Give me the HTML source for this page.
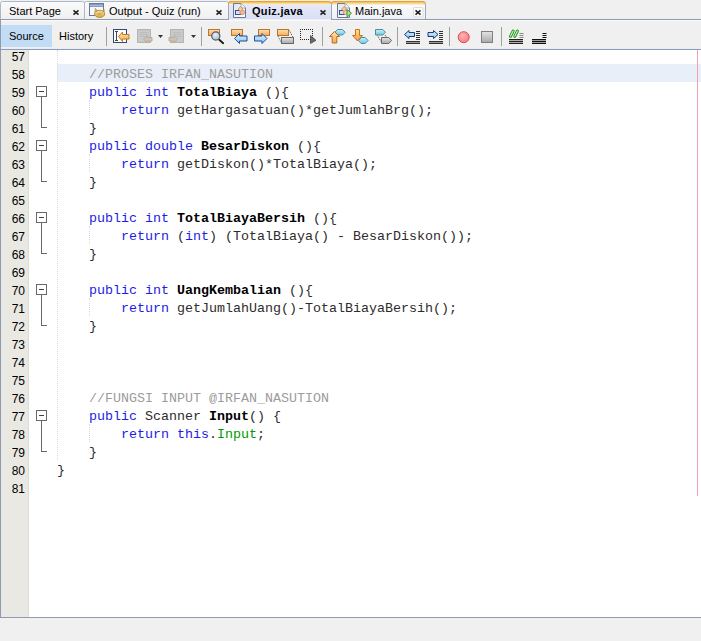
<!DOCTYPE html>
<html><head><meta charset="utf-8">
<style>
html,body{margin:0;padding:0;}
body{width:701px;height:641px;background:#f0f0f0;position:relative;overflow:hidden;font-family:"Liberation Sans",sans-serif;font-size:11px;color:#000;}
.abs{position:absolute;}
#tabs{left:0;top:0;width:701px;height:20px;}
.tab{position:absolute;top:1px;height:18px;box-sizing:border-box;border:1px solid #a9b5c7;border-bottom:none;border-radius:4px 4px 0 0;background:#f4f4f4;}
.tab span.l{position:absolute;top:3px;white-space:nowrap;font-size:11px;line-height:13px;}
.tab .x{position:absolute;top:3px;font-size:10px;font-weight:bold;line-height:13px;}
#tabline{left:0;top:19px;width:701px;height:1px;background:#98a5ba;}
#toolbar{left:0;top:20px;width:701px;height:29px;background:#f0f0f0;border-top:1px solid #fafafa;box-sizing:border-box;border-bottom:1px solid #e6edfb;}
#tbline{left:0;top:49px;width:701px;height:1px;background:#8e9bb0;}
#srcbtn{left:1px;top:25px;width:51px;height:22px;background:#c1dcf4;}
.tl{position:absolute;top:30px;font-size:11px;line-height:13px;white-space:nowrap;}
.tt{position:absolute;top:5px;font-size:11px;line-height:13px;white-space:nowrap;}
.sep{position:absolute;top:27px;width:1px;height:19px;background:#9a9a9a;}
#editor{left:0;top:50px;width:701px;height:567px;background:#fff;overflow:hidden;}
#leftb{left:0;top:20px;width:1px;height:598px;background:#8e9bb0;}
#gutter{left:1px;top:0;width:28px;height:567px;background:#e9e8e2;box-sizing:border-box;border-right:1px solid #dcdcd6;}
#edbot{left:0;top:617px;width:701px;height:1px;background:#8e9bb0;}
.ln{position:absolute;left:0;width:25px;margin-top:1px;text-align:right;font-family:"Liberation Sans",sans-serif;font-size:12px;line-height:18px;height:18px;color:#000;}
.cl{position:absolute;left:57px;white-space:pre;font-family:"Liberation Mono",monospace;font-size:13.333px;line-height:18px;height:18px;color:#2c2c2c;}
.k{color:#1c1ce6;}
.c{color:#9c9c9c;}
.f{color:#009900;}
.cl b{font-weight:bold;color:#000;}
#hl{left:57px;top:14px;width:644px;height:18px;background:#e9eff8;}
#dot{left:57px;top:0;width:0;height:410px;border-left:1px dotted #dadada;}
#margin{left:697px;top:0;width:1px;height:446px;background:#f0a0b0;}
.fb{position:absolute;left:36px;width:9px;height:9px;border:1px solid #686868;background:#fff;}
.fb i{position:absolute;left:2px;top:4px;width:5px;height:1px;background:#404040;}
.fv{position:absolute;left:41px;width:1px;background:#686868;}
.fh{position:absolute;left:41px;width:6px;height:1px;background:#686868;}
.ig{position:absolute;width:0;border-left:1px dotted #d8d8d8;height:18px;}
</style></head><body>
<svg class="abs" style="left:0;top:0" width="701" height="20" viewBox="0 0 701 20">
<defs>
<linearGradient id="tN" x1="0" y1="0" x2="0" y2="1"><stop offset="0" stop-color="#fbfbfb"/><stop offset="1" stop-color="#efefef"/></linearGradient>
<linearGradient id="tS" x1="0" y1="0" x2="0" y2="1"><stop offset="0" stop-color="#e8ebfa"/><stop offset="1" stop-color="#d9dff4"/></linearGradient>
<linearGradient id="tM" x1="0" y1="0" x2="0" y2="1"><stop offset="0" stop-color="#fdfdfd"/><stop offset="1" stop-color="#eef0f4"/></linearGradient>
<linearGradient id="oT" gradientUnits="userSpaceOnUse" x1="0" y1="1.500" x2="0" y2="4.500"><stop offset="0" stop-color="#f4ac30"/><stop offset="0.500" stop-color="#fad078"/><stop offset="1" stop-color="#f4ecd8"/></linearGradient>
<linearGradient id="cat" x1="0" y1="0" x2="0" y2="1"><stop offset="0" stop-color="#f6dca0"/><stop offset="1" stop-color="#dcaa40"/></linearGradient>
<linearGradient id="pg" x1="0" y1="0" x2="1" y2="1"><stop offset="0" stop-color="#dfe4f6"/><stop offset="1" stop-color="#ffffff"/></linearGradient>
</defs>
<!-- tab 1 -->
<path d="M0.500 19.500V3.500a2 2 0 0 1 2-2H82.500a2 2 0 0 1 2 2V19.500z" fill="url(#tN)" stroke="#acb7ca"/>
<!-- tab 2 -->
<path d="M84.500 19.500V3.500a2 2 0 0 1 2-2H226.500a2 2 0 0 1 2 2V19.500z" fill="url(#tN)" stroke="#acb7ca"/>
<!-- tab 3 selected -->
<path d="M228.500 19.500V4a2.500 2.500 0 0 1 2.500-2.500H328.500a3 3 0 0 1 3 3V19.500z" fill="url(#tS)" stroke="#9aa8c0"/>
<path d="M229 5V4a2.500 2.500 0 0 1 2.500-2.500H328.500a3 3 0 0 1 2.500 2.500V5z" fill="url(#oT)"/><path d="M228.500 4.500V4a2.500 2.500 0 0 1 2.500-2.500H328.500a3 3 0 0 1 3 3" fill="none" stroke="#eea42a"/>
<!-- tab 4 -->
<path d="M331.500 19.500V4a2.500 2.500 0 0 1 2.500-2.500H422.500a3 3 0 0 1 3 3V19.500z" fill="url(#tM)" stroke="#9aa8c0"/>
<path d="M332 5V4a2.500 2.500 0 0 1 2.500-2.500H422.500a3 3 0 0 1 2.500 2.500V5z" fill="url(#oT)"/><path d="M331.500 4.500V4a2.500 2.500 0 0 1 2.500-2.500H422.500a3 3 0 0 1 3 3" fill="none" stroke="#eea42a"/>
<!-- bottom line -->
<rect x="426" y="18" width="275" height="1" fill="#e8eefa"/>
<rect x="0" y="19" width="701" height="1" fill="#929cae"/>
<rect x="229" y="19" width="102" height="1" fill="#eef0f8"/>
<!-- close x -->
<g stroke="#222" stroke-width="1.600" fill="none">
<path d="M73.5 10.400l5 4.200M78.5 10.400l-5 4.200"/>
<path d="M216.5 10.400l5 4.200M221.5 10.400l-5 4.200"/>
<path d="M320.5 10.400l5 4.200M325.5 10.400l-5 4.200"/>
</g>
<rect x="413.500" y="7.500" width="9.500" height="9.500" rx="1" fill="#fcfcfc" stroke="#dcdcdc"/>
<path d="M415.5 10.400l5 4.200M420.5 10.400l-5 4.200" stroke="#222" stroke-width="1.700" fill="none"/>
<!-- output icon -->
<rect x="89.500" y="3.500" width="14" height="12" fill="#f4f8ff" stroke="#6c7890"/>
<rect x="90" y="4" width="13" height="3" fill="#8a9cc0"/><rect x="90" y="5" width="13" height="1" fill="#a8b8d8"/>
<path d="M95 12l0.300-3.600l2 2.200zM104.200 12l0-2.400l-1.500 1z" fill="#ecc468" stroke="#a87c20" stroke-width="0.600" stroke-linejoin="round"/>
<ellipse cx="99.600" cy="13.900" rx="5.100" ry="3.600" fill="url(#cat)" stroke="#a87c20" stroke-width="0.800"/>
<path d="M97.500 14h4" stroke="#c08828" stroke-width="0.800"/>
<!-- Quiz.java icon -->
<path d="M233.500 3.500h7.500l4.500 4.500v9.500h-12z" fill="url(#pg)" stroke="#6c7890"/>
<path d="M241 3.500v4.500h4.500" fill="#f4f6fc" stroke="#8c98b0" stroke-width="0.800"/>
<rect x="235.500" y="10.500" width="5" height="4" fill="#d4e0f8" stroke="#2c4078" stroke-width="0.900"/>
<circle cx="242.200" cy="12.300" r="2.400" fill="#f8b8a0" stroke="#c87858" stroke-width="0.700"/>
<path d="M240.500 6.500l2.500 2.500l-2.500 2.500l-2.500-2.500z" fill="#f6cc94" stroke="#c08848" stroke-width="0.700"/>
<!-- Main.java icon -->
<path d="M337.500 3.500h7.500l4.500 4.500v9.500h-12z" fill="url(#pg)" stroke="#6c7890"/>
<path d="M345 3.500v4.500h4.500" fill="#f4f6fc" stroke="#8c98b0" stroke-width="0.800"/>
<rect x="339.500" y="10.500" width="5" height="4" fill="#d4e0f8" stroke="#2c4078" stroke-width="0.900"/>
<circle cx="345.500" cy="12.300" r="2.200" fill="#f8c8c0" stroke="#c87858" stroke-width="0.700"/>
<path d="M344 6.500l2.500 2.500l-2.500 2.500l-2.500-2.500z" fill="#f6cc94" stroke="#c08848" stroke-width="0.700"/>
<path d="M347 9.500l4.500 3.800l-4.500 3.800z" fill="#a4e888" stroke="#3a8c2a" stroke-width="0.900" stroke-linejoin="round"/>
</svg>

<span class="tt" style="left:9px;">Start Page</span>
<span class="tt" style="left:109px;">Output - Quiz (run)</span>
<span class="tt" style="left:252px;font-weight:bold;letter-spacing:0.3px;">Quiz.java</span>
<span class="tt" style="left:355px;">Main.java</span>
<div id="toolbar" class="abs"></div>
<div id="srcbtn" class="abs"></div>
<span class="tl" style="left:9px;">Source</span>
<span class="tl" style="left:59px;">History</span>
<svg class="abs" style="left:0;top:20px" width="701" height="30" viewBox="0 20 701 30">
<defs>
<linearGradient id="gO" x1="0" y1="0" x2="0" y2="1"><stop offset="0" stop-color="#fde0b0"/><stop offset="1" stop-color="#f4ac58"/></linearGradient>
<linearGradient id="gB" x1="0" y1="0" x2="0" y2="1"><stop offset="0" stop-color="#e0f0ff"/><stop offset="1" stop-color="#8cc4f8"/></linearGradient>
<linearGradient id="gC" x1="0" y1="0" x2="0" y2="1"><stop offset="0" stop-color="#c8f0f8"/><stop offset="1" stop-color="#70c8e0"/></linearGradient>
<linearGradient id="gG" x1="0" y1="0" x2="0" y2="1"><stop offset="0" stop-color="#e4e4e4"/><stop offset="1" stop-color="#a8a8a8"/></linearGradient>
<radialGradient id="gR" cx="0.4" cy="0.35" r="0.7"><stop offset="0" stop-color="#ffb4b4"/><stop offset="1" stop-color="#f87880"/></radialGradient>
<radialGradient id="gM" cx="0.4" cy="0.35" r="0.7"><stop offset="0" stop-color="#e8f0f8"/><stop offset="1" stop-color="#a4bcd8"/></radialGradient>
<linearGradient id="gO2" x1="0" y1="0" x2="0" y2="1"><stop offset="0" stop-color="#fce080"/><stop offset="1" stop-color="#f89858"/></linearGradient>
</defs>
<!-- separators -->
<g fill="#a0a0a0">
<rect x="106" y="27" width="1" height="19"/><rect x="201" y="27" width="1" height="19"/><rect x="322" y="27" width="1" height="19"/><rect x="397" y="27" width="1" height="19"/><rect x="449" y="27" width="1" height="19"/><rect x="501" y="27" width="1" height="19"/>
</g>
<!-- 1 last edit -->
<rect x="113.5" y="29.5" width="13" height="13" fill="#fff" stroke="#2c4a74"/>
<path d="M115 31.5h3M116.5 31.5v9M115 40.5h3" stroke="#444" fill="none"/>
<path d="M118.5 36.5l4-4.5v2.5h6.5v4.5h-6.5v2.5z" fill="url(#gO)" stroke="#c47a18" stroke-width="1" stroke-linejoin="round"/>
<!-- 2 back disabled -->
<rect x="137.5" y="29.5" width="13" height="13" fill="#c9c9c9" stroke="#b4b4b4"/>
<path d="M139.5 32.5h8M139.5 34.5h8M139.5 36.5h5" stroke="#bdbdbd" fill="none"/>
<path d="M143.5 39l3.5-3.5v2h5v3.500h-5v2z" fill="#cfc4b4" stroke="#b8ac9c" stroke-linejoin="round"/>
<path d="M158 35h5l-2.500 3z" fill="#333"/>
<!-- 3 forward disabled -->
<rect x="170.500" y="29.500" width="13" height="13" fill="#c9c9c9" stroke="#b4b4b4"/>
<path d="M173.500 32.500h8M173.500 34.500h8M176.500 36.500h5" stroke="#bdbdbd" fill="none"/>
<path d="M177.500 39l-3.500-3.500v2h-5v3.500h5v2z" fill="#cfc4b4" stroke="#b8ac9c" stroke-linejoin="round"/>
<path d="M191 35h5l-2.500 3z" fill="#333"/>
<!-- 4 find selection -->
<rect x="208.500" y="29.500" width="11" height="6" fill="url(#gO)" stroke="#b87430"/>
<path d="M219 39.500l4.200 3.700" stroke="#1a1a1a" stroke-width="1.800" stroke-linecap="round"/>
<circle cx="215.800" cy="36" r="4.100" fill="url(#gM)" stroke="#5a5a5a" stroke-width="1.200"/>
<!-- 5 find prev -->
<rect x="231.500" y="29.500" width="11" height="6" fill="url(#gO)" stroke="#b87430"/>
<path d="M234.500 38.500l5-5v2.500h7.500v5h-7.500v2.500z" fill="url(#gB)" stroke="#1c4c9c" stroke-linejoin="round"/>
<!-- 6 find next -->
<rect x="258.500" y="29.500" width="11" height="6" fill="url(#gO)" stroke="#b87430"/>
<path d="M267 38.500l-5-5v2.500h-7.500v5h7.500v2.500z" fill="url(#gB)" stroke="#1c4c9c" stroke-linejoin="round"/>
<!-- 7 toggle highlight -->
<path d="M278 36l3.500 7M289.500 30.500l3.500 7" stroke="#555" stroke-dasharray="1 1" fill="none"/>
<rect x="277.500" y="29.500" width="11" height="6" fill="url(#gO)" stroke="#b87430"/>
<rect x="281.500" y="37.500" width="12" height="6" fill="url(#gG)" stroke="#686868"/>
<!-- 8 rect selection -->
<path d="M300 29.500H313M300 39.500H313M300.500 29V40M312.500 29V40" fill="none" stroke="#222" stroke-dasharray="1 1"/>
<path d="M310.500 35.500v8l5.500-3.200z" fill="#6a6a6a" stroke="#3c3c3c" stroke-width="0.700" stroke-linejoin="round"/>
<!-- 9 prev bookmark -->
<path d="M335 32.300l2.500-2.800h5l2.700 2.800l-2.700 2.700h-5z" fill="url(#gC)" stroke="#4a8ca4" stroke-linejoin="round"/>
<path d="M334.500 31.500l5 5h-2.700v6.500h-4.600v-6.500h-2.700z" fill="url(#gO)" stroke="#bc6a14" stroke-linejoin="round"/>
<!-- 10 next bookmark -->
<path d="M358.500 40.500l2.700-3h4l2.800 3l-2.800 3h-4z" fill="url(#gC)" stroke="#4a8ca4" stroke-linejoin="round"/>
<path d="M357.500 41l-5-5.500h3v-6h4v6h3z" fill="url(#gO2)" stroke="#c8741a" stroke-linejoin="round"/>
<!-- 11 toggle bookmark -->
<path d="M377.500 35.500l4 7M385 35l1.500 2" stroke="#444" stroke-dasharray="1 1" fill="none"/>
<path d="M375.500 29.500h7.300l2.700 2.800l-2.700 2.700h-7.300z" fill="url(#gC)" stroke="#4a8ca4" stroke-linejoin="round"/>
<path d="M381.500 37.500h7.300l2.700 3l-2.700 3h-7.300z" fill="url(#gG)" stroke="#6a6a6a" stroke-linejoin="round"/>
<!-- 12 shift left -->
<path d="M416 31.500h4M416 33.500h4M416 35.500h4M416 37.500h4M416 39.500h4M406 41.500h14M406 43.500h14" stroke="#333" fill="none"/><path d="M406 42.500h14" stroke="#999" fill="none"/>
<path d="M404.500 34.500l4.500-4v2h5.500v4h-5.500v2z" fill="url(#gB)" stroke="#1c3c6c" stroke-linejoin="round"/>
<!-- 13 shift right -->
<path d="M439 31.500h4M439 33.500h4M439 35.500h4M439 37.500h4M439 39.500h4M429 41.500h14M429 43.500h14" stroke="#333" fill="none"/><path d="M429 42.500h14" stroke="#999" fill="none"/>
<path d="M438 34.500l-4.500-4v2h-5.500v4h5.500v2z" fill="url(#gB)" stroke="#1c3c6c" stroke-linejoin="round"/>
<!-- 14 record -->
<circle cx="463.700" cy="37.200" r="5.500" fill="url(#gR)" stroke="#d8485c" stroke-width="1"/>
<!-- 15 stop -->
<rect x="481.500" y="31.500" width="11" height="11" fill="url(#gG)" stroke="#808080"/>
<!-- 16 comment -->
<path d="M519.500 33.500h4M519.500 35.500h4M519.500 37.500h4" stroke="#888" fill="none"/>
<path d="M509 40.500h14M509 42.500h14" stroke="#b0b0b0" fill="none"/><path d="M509 39.500h14M509 41.500h14M509 43.500h14" stroke="#222" fill="none"/>
<path d="M510.500 36.300l2.600-5.200M514.800 36.300l2.600-5.200" stroke="#1c961c" stroke-width="3" stroke-linecap="round" fill="none"/>
<path d="M510.500 36.300l2.600-5.200M514.800 36.300l2.600-5.200" stroke="#d4f4c4" stroke-width="1.100" stroke-linecap="round" fill="none"/>
<!-- 17 uncomment -->
<path d="M542.500 33.500h4M542.500 35.500h4M542.500 37.500h4M532 39.500h14M532 41.500h14M532 43.500h14" stroke="#111" fill="none"/><path d="M532 40.500h14M532 42.500h14" stroke="#a0a0a0" fill="none"/>
</svg>

<div id="tbline" class="abs"></div>
<div id="editor" class="abs">
 <div id="gutter" class="abs"></div>
 <div id="hl" class="abs"></div>
 <div id="dot" class="abs"></div>
 <div id="margin" class="abs"></div>
<div class="ln" style="top:-3px">57</div>
<div class="ln" style="top:15px">58</div>
<div class="cl" style="top:16px">    <span class="c">//PROSES IRFAN_NASUTION</span></div>
<div class="ln" style="top:33px">59</div>
<div class="cl" style="top:34px">    <span class="k">public</span> <span class="k">int</span> <b>TotalBiaya</b> (){</div>
<div class="ln" style="top:51px">60</div>
<div class="cl" style="top:52px">        <span class="k">return</span> getHargasatuan()*getJumlahBrg();</div>
<div class="ln" style="top:69px">61</div>
<div class="cl" style="top:70px">    }</div>
<div class="ln" style="top:87px">62</div>
<div class="cl" style="top:88px">    <span class="k">public</span> <span class="k">double</span> <b>BesarDiskon</b> (){</div>
<div class="ln" style="top:105px">63</div>
<div class="cl" style="top:106px">        <span class="k">return</span> getDiskon()*TotalBiaya();</div>
<div class="ln" style="top:123px">64</div>
<div class="cl" style="top:124px">    }</div>
<div class="ln" style="top:141px">65</div>
<div class="ln" style="top:159px">66</div>
<div class="cl" style="top:160px">    <span class="k">public</span> <span class="k">int</span> <b>TotalBiayaBersih</b> (){</div>
<div class="ln" style="top:177px">67</div>
<div class="cl" style="top:178px">        <span class="k">return</span> (<span class="k">int</span>) (TotalBiaya() - BesarDiskon());</div>
<div class="ln" style="top:195px">68</div>
<div class="cl" style="top:196px">    }</div>
<div class="ln" style="top:213px">69</div>
<div class="ln" style="top:231px">70</div>
<div class="cl" style="top:232px">    <span class="k">public</span> <span class="k">int</span> <b>UangKembalian</b> (){</div>
<div class="ln" style="top:249px">71</div>
<div class="cl" style="top:250px">        <span class="k">return</span> getJumlahUang()-TotalBiayaBersih();</div>
<div class="ln" style="top:267px">72</div>
<div class="cl" style="top:268px">    }</div>
<div class="ln" style="top:285px">73</div>
<div class="ln" style="top:303px">74</div>
<div class="ln" style="top:321px">75</div>
<div class="ln" style="top:339px">76</div>
<div class="cl" style="top:340px">    <span class="c">//FUNGSI INPUT @IRFAN_NASUTION</span></div>
<div class="ln" style="top:357px">77</div>
<div class="cl" style="top:358px">    <span class="k">public</span> Scanner <b>Input</b>() {</div>
<div class="ln" style="top:375px">78</div>
<div class="cl" style="top:376px">        <span class="k">return</span> <span class="k">this</span>.<span class="f">Input</span>;</div>
<div class="ln" style="top:393px">79</div>
<div class="cl" style="top:394px">    }</div>
<div class="ln" style="top:411px">80</div>
<div class="cl" style="top:412px">}</div>
<div class="ln" style="top:429px">81</div>
<div class="fb" style="top:36px"><i></i></div>
<div class="fv" style="top:47px;height:31px"></div>
<div class="fh" style="top:77px"></div>
<div class="ig" style="left:89px;top:50px"></div>
<div class="fb" style="top:90px"><i></i></div>
<div class="fv" style="top:101px;height:31px"></div>
<div class="fh" style="top:131px"></div>
<div class="ig" style="left:89px;top:104px"></div>
<div class="fb" style="top:162px"><i></i></div>
<div class="fv" style="top:173px;height:31px"></div>
<div class="fh" style="top:203px"></div>
<div class="ig" style="left:89px;top:176px"></div>
<div class="fb" style="top:234px"><i></i></div>
<div class="fv" style="top:245px;height:31px"></div>
<div class="fh" style="top:275px"></div>
<div class="ig" style="left:89px;top:248px"></div>
<div class="fb" style="top:360px"><i></i></div>
<div class="fv" style="top:371px;height:31px"></div>
<div class="fh" style="top:401px"></div>
<div class="ig" style="left:89px;top:374px"></div>
</div>
<div id="leftb" class="abs"></div>
<div id="edbot" class="abs"></div>
</body></html>
